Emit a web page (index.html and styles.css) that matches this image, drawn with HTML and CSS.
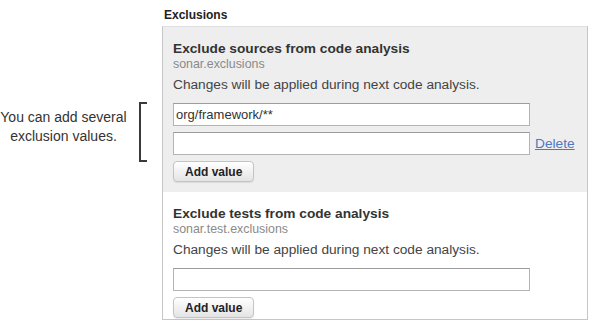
FILE: index.html
```html
<!DOCTYPE html>
<html>
<head>
  <title>Exclusions</title>
  <link rel="stylesheet" href="styles.css">
</head>
<body>
  <div class="page">
    <div class="note">
      <p class="note-text">You can add several<br>exclusion values.</p>
      <div class="bracket"></div>
    </div>
    <div class="settings">
      <h3>Exclusions</h3>
      <div class="panel">
        <div class="prop prop-active">
          <div class="prop-title">Exclude sources from code analysis</div>
          <div class="prop-key">sonar.exclusions</div>
          <div class="prop-desc">Changes will be applied during next code analysis.</div>
          <div class="value-row"><input type="text" value="org/framework/**"></div>
          <div class="value-row"><input type="text"><a href="#" class="delete">Delete</a></div>
          <button class="add-btn">Add value</button>
        </div>
        <div class="prop prop-last">
          <div class="prop-title">Exclude tests from code analysis</div>
          <div class="prop-key">sonar.test.exclusions</div>
          <div class="prop-desc">Changes will be applied during next code analysis.</div>
          <div class="value-row"><input type="text"></div>
          <button class="add-btn">Add value</button>
        </div>
      </div>
    </div>
  </div>
</body>
</html>
```

FILE: styles.css
```css
body
{
  margin: 0;
  font-family: "Liberation Sans", Arial, sans-serif;
  background-color: #fff;
  color: #333;
}
.page
{
  display: flex;
}
.note
{
  width: 162px;
  padding-top: 102px;
  display: flex;
  align-items: flex-start;
}
.note-text
{
  width: 127px;
  margin: 6px 0 0 0;
  font-size: 14px;
  line-height: 19px;
  text-align: center;
  color: #333;
}
.bracket
{
  margin-left: 12px;
  width: 6px;
  height: 56px;
  border: 2px solid #3a3a3a;
  border-right: none;
}
.settings
{
  width: 426px;
}
.settings h3
{
  margin: 0 0 3px 0;
  padding: 7px 0 0 2px;
  font-size: 12px;
  line-height: 16px;
  color: #222;
}
.panel
{
  border: 1px solid #c6c6c6;
  border-top-color: #e0e0e0;
}
.prop
{
  padding: 14px 10px 10px 10px;
}
.prop-active
{
  background-color: #eeeeee;
}
.prop-last
{
  padding-bottom: 1px;
}
.prop-title
{
  font-size: 13.7px;
  font-weight: bold;
  line-height: 16px;
  color: #333;
}
.prop-key
{
  font-size: 12.4px;
  line-height: 14px;
  color: #8a8a8a;
}
.prop-desc
{
  margin-top: 6px;
  font-size: 13.7px;
  line-height: 16px;
  color: #444;
}
.value-row
{
  display: flex;
  align-items: center;
  margin-top: 6px;
}
.prop-desc + .value-row
{
  margin-top: 10px;
}
.value-row input
{
  box-sizing: border-box;
  width: 357px;
  height: 23px;
  margin: 0;
  padding: 0 2px;
  border: 1px solid #b4b4b4;
  border-top-color: #9c9c9c;
  background-color: #fff;
  font-family: "Liberation Sans", Arial, sans-serif;
  font-size: 13px;
  color: #333;
}
.delete
{
  margin-left: 5px;
  font-size: 13.7px;
  color: #4f78c4;
}
.add-btn
{
  display: block;
  box-sizing: border-box;
  height: 21px;
  margin-top: 6px;
  padding: 0 11px;
  border: 1px solid #c4c4c4;
  border-radius: 4px;
  background: linear-gradient(#ffffff, #e4e4e4);
  box-shadow: 0 1px 1px rgba(0, 0, 0, 0.08);
  font-family: "Liberation Sans", Arial, sans-serif;
  font-size: 12px;
  font-weight: bold;
  color: #222;
  cursor: pointer;
}
```
